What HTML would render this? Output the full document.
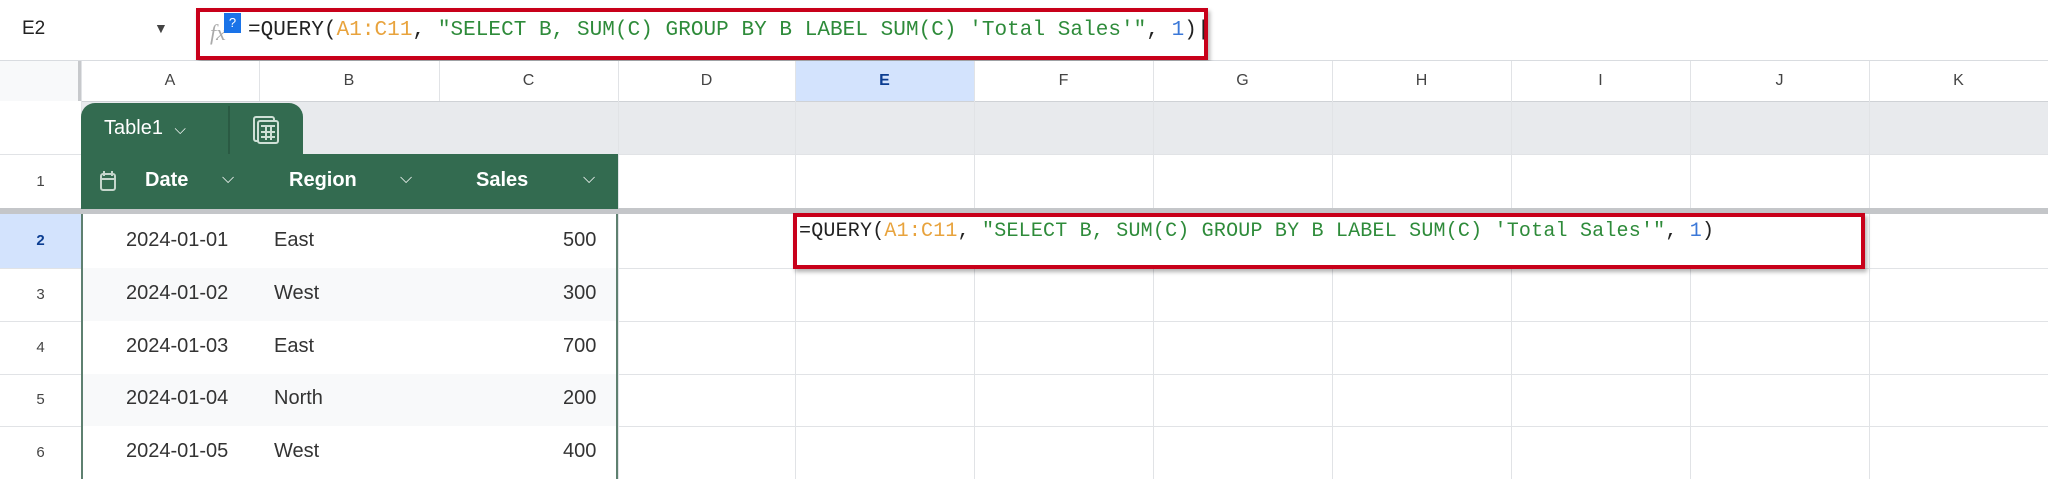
<!DOCTYPE html>
<html><head><meta charset="utf-8"><style>
*{margin:0;padding:0;box-sizing:border-box}
body{width:2048px;height:479px;overflow:hidden;background:#fff;font-family:"Liberation Sans",Arial,sans-serif;position:relative}
.a{position:absolute}
.mono{font-family:"Liberation Mono",monospace;white-space:pre}
.o{color:#e8a33d}.g{color:#2e8b3a}.b{color:#3b78d8}
.vl{position:absolute;width:1px;background:#e1e3e6}
.hl{position:absolute;height:1px;background:#e1e3e6;left:0;width:2048px}
.ch{position:absolute;top:61px;height:40px;line-height:40px;text-align:center;font-size:16px;color:#444}
.rh{position:absolute;left:0;width:81px;text-align:center;font-size:15px;color:#444}
.cell{position:absolute;font-size:20px;color:#333}
</style></head><body>
<div class="a" style="left:0;top:0;width:2048px;height:61px;background:#fff;border-bottom:1px solid #d9dce0"></div>
<div class="a" style="left:22px;top:18px;font-size:19px;color:#222">E2</div>
<div class="a" style="left:154px;top:20px;font-size:14px;color:#444">▼</div>
<div class="a" style="left:196px;top:8px;width:1012px;height:52px;border:4px solid #c8001a;box-shadow:2px 3px 4px rgba(0,0,0,.3)"></div>
<div class="a" style="left:210px;top:20px;font-size:22px;font-style:italic;color:#aaa;font-family:'Liberation Serif',serif">fx</div>
<div class="a" style="left:224px;top:13px;width:17px;height:20px;background:#1a73e8;color:#fff;font-size:13px;text-align:center;line-height:20px">?</div>
<div class="a mono" style="left:248px;top:19px;font-size:21px;letter-spacing:0.05px;color:#222">=QUERY(<span class="o">A1:C11</span>, <span class="g">"SELECT B, SUM(C) GROUP BY B LABEL SUM(C) 'Total Sales'"</span>, <span class="b">1</span>)|</div>
<div class="a" style="left:0;top:61px;width:2048px;height:40px;background:#fff"></div>
<div class="a" style="left:0;top:61px;width:81px;height:40px;background:#f8f9fa"></div>
<div class="a" style="left:795px;top:61px;width:179px;height:40px;background:#d3e3fd"></div>
<div class="ch" style="left:81px;width:178px">A</div>
<div class="ch" style="left:259px;width:180px">B</div>
<div class="ch" style="left:439px;width:179px">C</div>
<div class="ch" style="left:618px;width:177px">D</div>
<div class="ch" style="left:795px;width:179px;color:#0b3d91;font-weight:bold">E</div>
<div class="ch" style="left:974px;width:179px">F</div>
<div class="ch" style="left:1153px;width:179px">G</div>
<div class="ch" style="left:1332px;width:179px">H</div>
<div class="ch" style="left:1511px;width:179px">I</div>
<div class="ch" style="left:1690px;width:179px">J</div>
<div class="ch" style="left:1869px;width:179px">K</div>
<div class="a" style="left:78px;top:61px;width:4px;height:40px;background:#c7c9cc"></div>
<div class="a" style="left:81px;top:101px;width:1967px;height:53px;background:#e8eaed"></div>
<div class="hl" style="top:101px;background:#cfd2d6"></div>
<div class="hl" style="top:154px"></div>
<div class="vl" style="left:81px;top:61px;height:418px"></div>
<div class="vl" style="left:259px;top:61px;height:40px"></div>
<div class="vl" style="left:439px;top:61px;height:40px"></div>
<div class="vl" style="left:618px;top:61px;height:418px"></div>
<div class="vl" style="left:795px;top:61px;height:418px"></div>
<div class="vl" style="left:974px;top:61px;height:418px"></div>
<div class="vl" style="left:1153px;top:61px;height:418px"></div>
<div class="vl" style="left:1332px;top:61px;height:418px"></div>
<div class="vl" style="left:1511px;top:61px;height:418px"></div>
<div class="vl" style="left:1690px;top:61px;height:418px"></div>
<div class="vl" style="left:1869px;top:61px;height:418px"></div>
<div class="hl" style="top:208px"></div>
<div class="hl" style="top:268px"></div>
<div class="hl" style="top:321px"></div>
<div class="hl" style="top:374px"></div>
<div class="hl" style="top:426px"></div>
<div class="a" style="left:0;top:101px;width:81px;height:53px;background:#fff"></div>
<div class="a" style="left:0;top:208px;width:2048px;height:6px;background:#c4c6c9"></div>
<div class="rh" style="top:155px;height:53px;line-height:53px">1</div>
<div class="a" style="left:0;top:214px;width:81px;height:54px;background:#d3e3fd"></div>
<div class="rh" style="top:214px;height:54px;line-height:54px;color:#0b3d91;font-weight:bold">2</div>
<div class="rh" style="top:268px;height:53px;line-height:53px">3</div>
<div class="rh" style="top:321px;height:53px;line-height:53px">4</div>
<div class="rh" style="top:374px;height:52px;line-height:52px">5</div>
<div class="rh" style="top:426px;height:53px;line-height:53px">6</div>
<div class="a" style="left:81px;top:103px;width:222px;height:53px;background:#336b50;border-radius:14px 14px 0 0"></div>
<div class="a" style="left:228px;top:106px;width:2px;height:48px;background:#2a5a43"></div>
<div class="a" style="left:104px;top:117px;font-size:20px;color:#fff">Table1 <span style="font-size:15px;margin-left:6px">⌵</span></div>
<svg class="a" style="left:250px;top:114px" width="32" height="32" viewBox="0 0 32 32" fill="none" stroke="#cfe0d6" stroke-width="2"><rect x="4" y="3" width="20" height="24" rx="2"/><rect x="8" y="7" width="20" height="22" rx="2" fill="#336b50"/><path d="M11 12h14M11 18h14M11 23h14M16 12v14M21 12v14"/></svg>
<div class="a" style="left:81px;top:154px;width:537px;height:55px;background:#336b50"></div>
<svg class="a" style="left:99px;top:170px" width="18" height="22" viewBox="0 0 18 22" fill="none" stroke="#c5d6cc" stroke-width="2"><rect x="2" y="4" width="14" height="16" rx="2"/><path d="M5 1v5M13 1v5M2 9h14"/></svg>
<div class="a" style="left:145px;top:169px;font-size:20px;font-weight:bold;color:#fff">Date</div>
<div class="a" style="left:222px;top:170px;font-size:16px;color:#fff">⌵</div>
<div class="a" style="left:289px;top:169px;font-size:20px;font-weight:bold;color:#fff">Region</div>
<div class="a" style="left:400px;top:170px;font-size:16px;color:#fff">⌵</div>
<div class="a" style="left:476px;top:169px;font-size:20px;font-weight:bold;color:#fff">Sales</div>
<div class="a" style="left:583px;top:170px;font-size:16px;color:#fff">⌵</div>
<div class="a" style="left:81px;top:214px;width:537px;height:265px;border-left:2px solid #5e8070;border-right:2px solid #5e8070;background:#fff"></div>
<div class="a" style="left:83px;top:268px;width:533px;height:53px;background:#f8f9fa"></div>
<div class="a" style="left:83px;top:374px;width:533px;height:52px;background:#f8f9fa"></div>
<div class="cell" style="left:126px;top:229px">2024-01-01</div><div class="cell" style="left:274px;top:229px">East</div><div class="cell" style="left:563px;top:229px">500</div>
<div class="cell" style="left:126px;top:282px">2024-01-02</div><div class="cell" style="left:274px;top:282px">West</div><div class="cell" style="left:563px;top:282px">300</div>
<div class="cell" style="left:126px;top:335px">2024-01-03</div><div class="cell" style="left:274px;top:335px">East</div><div class="cell" style="left:563px;top:335px">700</div>
<div class="cell" style="left:126px;top:387px">2024-01-04</div><div class="cell" style="left:274px;top:387px">North</div><div class="cell" style="left:563px;top:387px">200</div>
<div class="cell" style="left:126px;top:440px">2024-01-05</div><div class="cell" style="left:274px;top:440px">West</div><div class="cell" style="left:563px;top:440px">400</div>
<div class="a" style="left:793px;top:213px;width:1072px;height:56px;background:#fff;border:4px solid #c8001a;box-shadow:2px 3px 4px rgba(0,0,0,.3)"></div>
<div class="a mono" style="left:799px;top:220px;font-size:20px;letter-spacing:0.2px;color:#222">=QUERY(<span class="o">A1:C11</span>, <span class="g">"SELECT B, SUM(C) GROUP BY B LABEL SUM(C) 'Total Sales'"</span>, <span class="b">1</span>)</div>
</body></html>
